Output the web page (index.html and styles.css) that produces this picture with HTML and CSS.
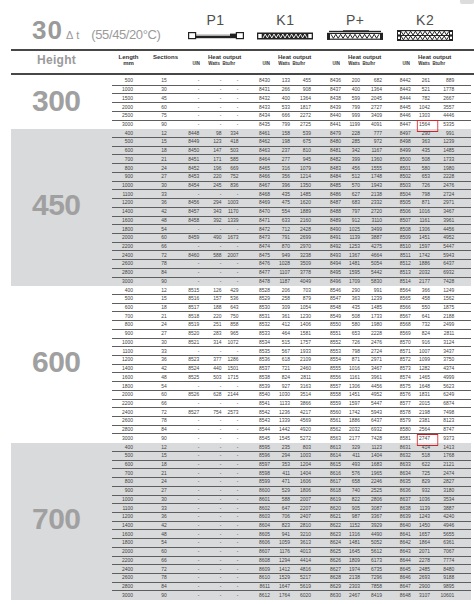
FILE: index.html
```html
<!DOCTYPE html>
<html>
<head>
<meta charset="utf-8">
<link rel="stylesheet" href="styles.css">
</head>
<body>
<div class="page">
  <div class="title">
    <div class="ttl"><span class="big">30</span><span class="dt">Δt</span><span class="cond">(55/45/20°C)</span></div>
    <div class="model"><div class="mname">P1</div>
      <svg viewBox="0 0 56 11"><rect x="7.5" y="4.2" width="41" height="1.6" fill="#c4c4c4"/><rect x="7.5" y="5.8" width="41" height="2.4" fill="#222"/><rect x="42" y="3.6" width="6.5" height="2.4" fill="#222"/><rect x="0.6" y="2.6" width="7" height="6" fill="#fff" stroke="#222" stroke-width="1.2"/><rect x="48.4" y="2.6" width="7" height="6" fill="#fff" stroke="#222" stroke-width="1.2"/></svg>
    </div>
    <div class="model"><div class="mname">K1</div>
      <svg viewBox="0 0 56 11"><rect x="0" y="2.5" width="56" height="7" fill="#222"/><polyline points="6,8 8.2,4 10.4,8 12.6,4 14.8,8 17,4 19.2,8 21.4,4 23.6,8 25.8,4 28,8 30.2,4 32.4,8 34.6,4 36.8,8 39,4 41.2,8 43.4,4 45.6,8 47.8,4 50,8" fill="none" stroke="#fff" stroke-width="0.9"/><rect x="1.3" y="4" width="3.4" height="4" fill="#fff"/><rect x="51.3" y="4" width="3.4" height="4" fill="#fff"/></svg>
    </div>
    <div class="model"><div class="mname">P+</div>
      <svg viewBox="0 0 56 11"><rect x="2" y="0.8" width="52" height="1.3" fill="#222"/><rect x="16" y="0.3" width="26" height="1.8" fill="#222"/><rect x="0.6" y="3.4" width="54.8" height="5.8" fill="#fff" stroke="#222" stroke-width="1.2"/><polyline points="4,4.3 6.4,8.3 8.8,4.3 11.2,8.3 13.6,4.3 16,8.3 18.4,4.3 20.8,8.3 23.2,4.3 25.6,8.3 28,4.3 30.4,8.3 32.8,4.3 35.2,8.3 37.6,4.3 40,8.3 42.4,4.3 44.8,8.3 47.2,4.3 49.6,8.3 52,4.3" fill="none" stroke="#222" stroke-width="1"/><rect x="0" y="3" width="3" height="6.8" fill="#222"/><rect x="53" y="3" width="3" height="6.8" fill="#222"/></svg>
    </div>
    <div class="model"><div class="mname">K2</div>
      <svg viewBox="0 0 56 11"><rect x="0.6" y="0.6" width="54.8" height="9.8" fill="#fff" stroke="#222" stroke-width="1.2"/><line x1="0" y1="5.5" x2="56" y2="5.5" stroke="#222" stroke-width="1"/><polyline points="4,1.2 6.4,5 8.8,1.2 11.2,5 13.6,1.2 16,5 18.4,1.2 20.8,5 23.2,1.2 25.6,5 28,1.2 30.4,5 32.8,1.2 35.2,5 37.6,1.2 40,5 42.4,1.2 44.8,5 47.2,1.2 49.6,5 52,1.2" fill="none" stroke="#222" stroke-width="1"/><polyline points="4,6 6.4,9.8 8.8,6 11.2,9.8 13.6,6 16,9.8 18.4,6 20.8,9.8 23.2,6 25.6,9.8 28,6 30.4,9.8 32.8,6 35.2,9.8 37.6,6 40,9.8 42.4,6 44.8,9.8 47.2,6 49.6,9.8 52,6" fill="none" stroke="#222" stroke-width="1"/><rect x="0" y="0" width="4" height="11" fill="#222"/><rect x="52" y="0" width="4" height="11" fill="#222"/><rect x="1" y="2" width="2" height="2.4" fill="#fff"/><rect x="1" y="6.6" width="2" height="2.4" fill="#fff"/><rect x="53" y="2" width="2" height="2.4" fill="#fff"/><rect x="53" y="6.6" width="2" height="2.4" fill="#fff"/></svg>
    </div>
    <div class="blob"></div>
  </div>
  <div class="rule"></div>
  <div class="hdr">
    <div class="h-height">Height</div>
    <div class="h-len">Length<br>mm</div>
    <div class="h-sec">Sections</div>
    <div class="h-mod"><div class="h-heat">Heat output</div><div class="h-sub"><span>UIN</span><span>Watts</span><span>Btu/hr</span></div></div>
    <div class="h-mod"><div class="h-heat">Heat output</div><div class="h-sub"><span>UIN</span><span>Watts</span><span>Btu/hr</span></div></div>
    <div class="h-mod"><div class="h-heat">Heat output</div><div class="h-sub"><span>UIN</span><span>Watts</span><span>Btu/hr</span></div></div>
    <div class="h-mod"><div class="h-heat">Heat output</div><div class="h-sub"><span>UIN</span><span>Watts</span><span>Btu/hr</span></div></div>
  </div>
  <div class="rule"></div>

  <div class="tbody">
    <div class="grp">
      <div class="lab">300</div>
      <div class="rows">
        <div class="r"><span>500</span><span>15</span><span>-</span><span>-</span><span>-</span><span>8430</span><span>133</span><span>455</span><span>8436</span><span>200</span><span>682</span><span>8442</span><span>261</span><span>889</span></div>
        <div class="r"><span>1000</span><span>30</span><span>-</span><span>-</span><span>-</span><span>8431</span><span>266</span><span>908</span><span>8437</span><span>400</span><span>1364</span><span>8443</span><span>521</span><span>1778</span></div>
        <div class="r"><span>1500</span><span>45</span><span>-</span><span>-</span><span>-</span><span>8432</span><span>400</span><span>1364</span><span>8438</span><span>599</span><span>2045</span><span>8444</span><span>782</span><span>2667</span></div>
        <div class="r"><span>2000</span><span>60</span><span>-</span><span>-</span><span>-</span><span>8433</span><span>533</span><span>1817</span><span>8439</span><span>799</span><span>2727</span><span>8445</span><span>1042</span><span>3557</span></div>
        <div class="r"><span>2500</span><span>75</span><span>-</span><span>-</span><span>-</span><span>8434</span><span>666</span><span>2272</span><span>8440</span><span>999</span><span>3409</span><span>8446</span><span>1303</span><span>4446</span></div>
        <div class="r"><span>3000</span><span>90</span><span>-</span><span>-</span><span>-</span><span>8435</span><span>799</span><span>2725</span><span>8441</span><span>1199</span><span>4091</span><span>8447</span><span class="hl">1564</span><span>5335</span></div>
      </div>
    </div>

    <div class="grp gray">
      <div class="lab">450</div>
      <div class="rows">
        <div class="r"><span>400</span><span>12</span><span>8448</span><span>98</span><span>334</span><span>8461</span><span>158</span><span>539</span><span>8479</span><span>228</span><span>777</span><span>8497</span><span>290</span><span>991</span></div>
        <div class="r"><span>500</span><span>15</span><span>8449</span><span>123</span><span>418</span><span>8462</span><span>198</span><span>675</span><span>8480</span><span>285</span><span>972</span><span>8498</span><span>363</span><span>1239</span></div>
        <div class="r"><span>600</span><span>18</span><span>8450</span><span>147</span><span>503</span><span>8463</span><span>237</span><span>810</span><span>8481</span><span>342</span><span>1167</span><span>8499</span><span>435</span><span>1485</span></div>
        <div class="r"><span>700</span><span>21</span><span>8451</span><span>171</span><span>585</span><span>8464</span><span>277</span><span>945</span><span>8482</span><span>399</span><span>1360</span><span>8500</span><span>508</span><span>1733</span></div>
        <div class="r"><span>800</span><span>24</span><span>8452</span><span>196</span><span>669</span><span>8465</span><span>316</span><span>1079</span><span>8483</span><span>456</span><span>1555</span><span>8501</span><span>580</span><span>1980</span></div>
        <div class="r"><span>900</span><span>27</span><span>8453</span><span>220</span><span>752</span><span>8466</span><span>356</span><span>1214</span><span>8484</span><span>512</span><span>1748</span><span>8502</span><span>653</span><span>2228</span></div>
        <div class="r"><span>1000</span><span>30</span><span>8454</span><span>245</span><span>836</span><span>8467</span><span>396</span><span>1350</span><span>8485</span><span>570</span><span>1943</span><span>8503</span><span>726</span><span>2476</span></div>
        <div class="r"><span>1100</span><span>33</span><span>-</span><span>-</span><span>-</span><span>8468</span><span>435</span><span>1485</span><span>8486</span><span>627</span><span>2138</span><span>8504</span><span>798</span><span>2724</span></div>
        <div class="r"><span>1200</span><span>36</span><span>8456</span><span>294</span><span>1003</span><span>8469</span><span>475</span><span>1620</span><span>8487</span><span>683</span><span>2332</span><span>8505</span><span>871</span><span>2971</span></div>
        <div class="r"><span>1400</span><span>42</span><span>8457</span><span>343</span><span>1170</span><span>8470</span><span>554</span><span>1889</span><span>8488</span><span>797</span><span>2720</span><span>8506</span><span>1016</span><span>3467</span></div>
        <div class="r"><span>1600</span><span>48</span><span>8458</span><span>392</span><span>1339</span><span>8471</span><span>633</span><span>2160</span><span>8489</span><span>912</span><span>3110</span><span>8507</span><span>1161</span><span>3961</span></div>
        <div class="r"><span>1800</span><span>54</span><span>-</span><span>-</span><span>-</span><span>8472</span><span>712</span><span>2428</span><span>8490</span><span>1025</span><span>3499</span><span>8508</span><span>1306</span><span>4456</span></div>
        <div class="r"><span>2000</span><span>60</span><span>8459</span><span>490</span><span>1673</span><span>8473</span><span>791</span><span>2699</span><span>8491</span><span>1139</span><span>3887</span><span>8509</span><span>1451</span><span>4952</span></div>
        <div class="r"><span>2200</span><span>66</span><span>-</span><span>-</span><span>-</span><span>8474</span><span>870</span><span>2970</span><span>8492</span><span>1253</span><span>4275</span><span>8510</span><span>1597</span><span>5447</span></div>
        <div class="r"><span>2400</span><span>72</span><span>8460</span><span>588</span><span>2007</span><span>8475</span><span>949</span><span>3238</span><span>8493</span><span>1367</span><span>4664</span><span>8511</span><span>1742</span><span>5943</span></div>
        <div class="r"><span>2600</span><span>78</span><span>-</span><span>-</span><span>-</span><span>8476</span><span>1028</span><span>3509</span><span>8494</span><span>1481</span><span>5054</span><span>8512</span><span>1886</span><span>6437</span></div>
        <div class="r"><span>2800</span><span>84</span><span>-</span><span>-</span><span>-</span><span>8477</span><span>1107</span><span>3778</span><span>8495</span><span>1595</span><span>5442</span><span>8513</span><span>2032</span><span>6932</span></div>
        <div class="r"><span>3000</span><span>90</span><span>-</span><span>-</span><span>-</span><span>8478</span><span>1187</span><span>4049</span><span>8496</span><span>1709</span><span>5830</span><span>8514</span><span>2177</span><span>7428</span></div>
      </div>
    </div>

    <div class="grp">
      <div class="lab">600</div>
      <div class="rows">
        <div class="r"><span>400</span><span>12</span><span>8515</span><span>126</span><span>429</span><span>8528</span><span>206</span><span>703</span><span>8546</span><span>290</span><span>991</span><span>8564</span><span>366</span><span>1249</span></div>
        <div class="r"><span>500</span><span>15</span><span>8516</span><span>157</span><span>536</span><span>8529</span><span>258</span><span>879</span><span>8547</span><span>363</span><span>1239</span><span>8565</span><span>458</span><span>1562</span></div>
        <div class="r"><span>600</span><span>18</span><span>8517</span><span>188</span><span>643</span><span>8530</span><span>309</span><span>1054</span><span>8548</span><span>435</span><span>1485</span><span>8566</span><span>550</span><span>1875</span></div>
        <div class="r"><span>700</span><span>21</span><span>8518</span><span>220</span><span>750</span><span>8531</span><span>361</span><span>1230</span><span>8549</span><span>508</span><span>1733</span><span>8567</span><span>641</span><span>2188</span></div>
        <div class="r"><span>800</span><span>24</span><span>8519</span><span>251</span><span>858</span><span>8532</span><span>412</span><span>1406</span><span>8550</span><span>580</span><span>1980</span><span>8568</span><span>732</span><span>2499</span></div>
        <div class="r"><span>900</span><span>27</span><span>8520</span><span>283</span><span>965</span><span>8533</span><span>464</span><span>1581</span><span>8551</span><span>653</span><span>2228</span><span>8569</span><span>824</span><span>2811</span></div>
        <div class="r"><span>1000</span><span>30</span><span>8521</span><span>314</span><span>1072</span><span>8534</span><span>515</span><span>1757</span><span>8552</span><span>726</span><span>2476</span><span>8570</span><span>916</span><span>3124</span></div>
        <div class="r"><span>1100</span><span>33</span><span>-</span><span>-</span><span>-</span><span>8535</span><span>567</span><span>1933</span><span>8553</span><span>798</span><span>2724</span><span>8571</span><span>1007</span><span>3437</span></div>
        <div class="r"><span>1200</span><span>36</span><span>8523</span><span>377</span><span>1286</span><span>8536</span><span>618</span><span>2109</span><span>8554</span><span>871</span><span>2971</span><span>8572</span><span>1099</span><span>3750</span></div>
        <div class="r"><span>1400</span><span>42</span><span>8524</span><span>440</span><span>1501</span><span>8537</span><span>721</span><span>2460</span><span>8555</span><span>1016</span><span>3467</span><span>8573</span><span>1282</span><span>4374</span></div>
        <div class="r"><span>1600</span><span>48</span><span>8525</span><span>503</span><span>1715</span><span>8538</span><span>824</span><span>2811</span><span>8556</span><span>1161</span><span>3961</span><span>8574</span><span>1465</span><span>4999</span></div>
        <div class="r"><span>1800</span><span>54</span><span>-</span><span>-</span><span>-</span><span>8539</span><span>927</span><span>3163</span><span>8557</span><span>1306</span><span>4456</span><span>8575</span><span>1648</span><span>5623</span></div>
        <div class="r"><span>2000</span><span>60</span><span>8526</span><span>628</span><span>2144</span><span>8540</span><span>1030</span><span>3514</span><span>8558</span><span>1451</span><span>4952</span><span>8576</span><span>1831</span><span>6249</span></div>
        <div class="r"><span>2200</span><span>66</span><span>-</span><span>-</span><span>-</span><span>8541</span><span>1133</span><span>3866</span><span>8559</span><span>1597</span><span>5447</span><span>8577</span><span>2015</span><span>6874</span></div>
        <div class="r"><span>2400</span><span>72</span><span>8527</span><span>754</span><span>2573</span><span>8542</span><span>1236</span><span>4217</span><span>8560</span><span>1742</span><span>5943</span><span>8578</span><span>2198</span><span>7498</span></div>
        <div class="r"><span>2600</span><span>78</span><span>-</span><span>-</span><span>-</span><span>8543</span><span>1339</span><span>4569</span><span>8561</span><span>1886</span><span>6437</span><span>8579</span><span>2381</span><span>8123</span></div>
        <div class="r"><span>2800</span><span>84</span><span>-</span><span>-</span><span>-</span><span>8544</span><span>1442</span><span>4920</span><span>8562</span><span>2032</span><span>6932</span><span>8580</span><span>2564</span><span>8747</span></div>
        <div class="r"><span>3000</span><span>90</span><span>-</span><span>-</span><span>-</span><span>8545</span><span>1545</span><span>5272</span><span>8563</span><span>2177</span><span>7428</span><span>8581</span><span class="hl">2747</span><span>9373</span></div>
      </div>
    </div>

    <div class="grp gray">
      <div class="lab">700</div>
      <div class="rows">
        <div class="r"><span>400</span><span>12</span><span>-</span><span>-</span><span>-</span><span>8595</span><span>235</span><span>803</span><span>8613</span><span>329</span><span>1123</span><span>8631</span><span>414</span><span>1413</span></div>
        <div class="r"><span>500</span><span>15</span><span>-</span><span>-</span><span>-</span><span>8596</span><span>294</span><span>1003</span><span>8614</span><span>411</span><span>1404</span><span>8632</span><span>518</span><span>1768</span></div>
        <div class="r"><span>600</span><span>18</span><span>-</span><span>-</span><span>-</span><span>8597</span><span>353</span><span>1204</span><span>8615</span><span>493</span><span>1683</span><span>8633</span><span>622</span><span>2121</span></div>
        <div class="r"><span>700</span><span>21</span><span>-</span><span>-</span><span>-</span><span>8598</span><span>411</span><span>1404</span><span>8616</span><span>576</span><span>1965</span><span>8634</span><span>725</span><span>2474</span></div>
        <div class="r"><span>800</span><span>24</span><span>-</span><span>-</span><span>-</span><span>8599</span><span>471</span><span>1606</span><span>8617</span><span>658</span><span>2246</span><span>8635</span><span>829</span><span>2827</span></div>
        <div class="r"><span>900</span><span>27</span><span>-</span><span>-</span><span>-</span><span>8600</span><span>529</span><span>1806</span><span>8618</span><span>740</span><span>2525</span><span>8636</span><span>932</span><span>3180</span></div>
        <div class="r"><span>1000</span><span>30</span><span>-</span><span>-</span><span>-</span><span>8601</span><span>588</span><span>2007</span><span>8619</span><span>822</span><span>2806</span><span>8637</span><span>1036</span><span>3534</span></div>
        <div class="r"><span>1100</span><span>33</span><span>-</span><span>-</span><span>-</span><span>8602</span><span>647</span><span>2207</span><span>8620</span><span>905</span><span>3087</span><span>8638</span><span>1139</span><span>3887</span></div>
        <div class="r"><span>1200</span><span>36</span><span>-</span><span>-</span><span>-</span><span>8603</span><span>706</span><span>2407</span><span>8621</span><span>987</span><span>3367</span><span>8639</span><span>1243</span><span>4240</span></div>
        <div class="r"><span>1400</span><span>42</span><span>-</span><span>-</span><span>-</span><span>8604</span><span>823</span><span>2810</span><span>8622</span><span>1152</span><span>3929</span><span>8640</span><span>1450</span><span>4946</span></div>
        <div class="r"><span>1600</span><span>48</span><span>-</span><span>-</span><span>-</span><span>8605</span><span>941</span><span>3210</span><span>8623</span><span>1316</span><span>4490</span><span>8641</span><span>1657</span><span>5655</span></div>
        <div class="r"><span>1800</span><span>54</span><span>-</span><span>-</span><span>-</span><span>8606</span><span>1059</span><span>3613</span><span>8624</span><span>1481</span><span>5052</span><span>8642</span><span>1864</span><span>6361</span></div>
        <div class="r"><span>2000</span><span>60</span><span>-</span><span>-</span><span>-</span><span>8607</span><span>1176</span><span>4013</span><span>8625</span><span>1645</span><span>5612</span><span>8643</span><span>2071</span><span>7067</span></div>
        <div class="r"><span>2200</span><span>66</span><span>-</span><span>-</span><span>-</span><span>8608</span><span>1294</span><span>4414</span><span>8626</span><span>1809</span><span>6173</span><span>8644</span><span>2278</span><span>7774</span></div>
        <div class="r"><span>2400</span><span>72</span><span>-</span><span>-</span><span>-</span><span>8609</span><span>1412</span><span>4816</span><span>8627</span><span>1974</span><span>6735</span><span>8645</span><span>2485</span><span>8480</span></div>
        <div class="r"><span>2600</span><span>78</span><span>-</span><span>-</span><span>-</span><span>8610</span><span>1529</span><span>5217</span><span>8628</span><span>2138</span><span>7296</span><span>8646</span><span>2693</span><span>9188</span></div>
        <div class="r"><span>2800</span><span>84</span><span>-</span><span>-</span><span>-</span><span>8611</span><span>1647</span><span>5619</span><span>8629</span><span>2303</span><span>7858</span><span>8647</span><span>2900</span><span>9895</span></div>
        <div class="r"><span>3000</span><span>90</span><span>-</span><span>-</span><span>-</span><span>8612</span><span>1764</span><span>6020</span><span>8630</span><span>2467</span><span>8419</span><span>8648</span><span>3107</span><span>10601</span></div>
      </div>
    </div>
  </div>
</div>
</body>
</html>
```

FILE: styles.css
```css
* { box-sizing: border-box; }
html, body { margin: 0; padding: 0; background: #fff; }
body {
  width: 474px;
  height: 604px;
  overflow: hidden;
  font-family: "Liberation Sans", Arial, sans-serif;
  color: #4d4d4d;
}
.page { margin-left: 11px; width: 463px; }

.title { display: flex; height: 49px; }
.ttl {
  width: 170px;
  padding: 17px 0 0 21px;
  line-height: 26px;
  white-space: nowrap;
  color: #9a9a9a;
}
.big { font-size: 26px; font-weight: bold; letter-spacing: 1px; }
.dt { font-size: 11px; letter-spacing: 3px; margin-left: 3px; }
.cond { font-size: 13px; letter-spacing: -0.4px; margin-left: 9px; }
.model { width: 70px; padding-top: 13px; text-align: center; }
.mname { font-size: 14px; line-height: 14px; color: #4f4f4f; letter-spacing: 0.5px; }
.model svg { display: block; margin: 3px auto 0; width: 56px; height: 11px; }
.blob { margin-left: auto; width: 14px; height: 4px; background: #dcdcdc; border-radius: 0 0 2px 2px; }

.rule { height: 2px; background: #474747; }

.hdr { display: flex; height: 22px; }
.h-height {
  width: 101px;
  padding: 3px 0 0 26px;
  font-size: 12px;
  line-height: 12px;
  font-weight: bold;
  color: #9a9a9a;
  letter-spacing: 0.3px;
}
.h-len, .h-sec, .h-heat, .h-sub {
  font-size: 6px;
  font-weight: bold;
  line-height: 6.5px;
  color: #333;
}
.h-len { width: 33px; padding-top: 2.5px; text-align: center; }
.h-sec { width: 41px; padding-top: 2.5px; text-align: center; }
.h-mod { width: 70px; padding-top: 2.5px; }
.h-heat { padding-left: 22px; white-space: nowrap; }
.h-sub { display: grid; grid-template-columns: 20px 16px 14px; }
.h-sub span { justify-self: center; white-space: nowrap; transform: scaleX(0.72); }

.tbody { margin-top: 2px; width: 460px; }
.grp { display: flex; }
.gray { background: #d9dadb; }
.lab {
  width: 101px;
  display: flex;
  align-items: center;
  padding: 0 0 5px 21px;
  font-size: 30px;
  font-weight: bold;
  color: #a0a0a0;
  letter-spacing: -0.5px;
}
.rows { flex: 1; }
.r {
  display: grid;
  grid-template-columns: 21px 33.7px 32.3px 22.5px 17.5px 31px 20px 21px 30px 19px 22px 28.7px 19px 24.3px 1fr;
  height: 8.73px;
  border-bottom: 1px solid #5e5e5e;
  align-items: center;
}
.r:last-child { border-bottom: 0; }
.r span {
  font-size: 6px;
  line-height: 7px;
  text-align: right;
  white-space: nowrap;
  transform: scaleX(0.82);
  transform-origin: 100% 50%;
  color: #444;
}
.r .hl { position: relative; }
.r .hl::after {
  content: "";
  position: absolute;
  right: -9.8px;
  width: 23.8px;
  top: 50%;
  height: 10px;
  margin-top: -5px;
  border: 1.5px solid #d2232a;
  border-left-width: 1.83px;
  border-right-width: 1.83px;
}
```
